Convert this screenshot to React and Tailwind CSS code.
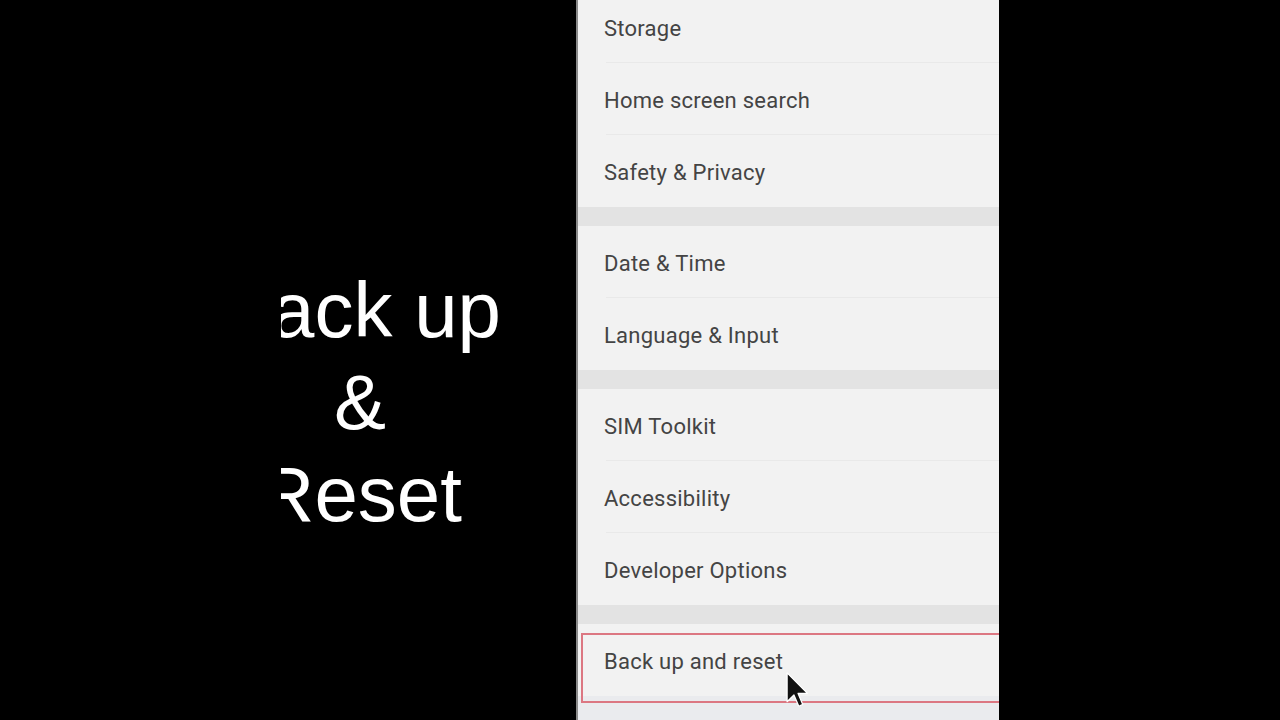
const groups = [
  ['Storage', 'Home screen search', 'Safety & Privacy'],
  ['Date & Time', 'Language & Input'],
  ['SIM Toolkit', 'Accessibility', 'Developer Options'],
  ['Back up and reset'],
]

function Row({ label, last }) {
  return (
    <div className="h-[72px] flex items-center pl-[26px] relative">
      <span className="text-[22px] tracking-[0.25px] text-[#444444] pt-[2px]">{label}</span>
      {!last && <div className="absolute left-[28px] right-0 bottom-0 h-px bg-[#e9e9e9]" />}
    </div>
  )
}

function Cursor() {
  return (
    <svg className="absolute left-[208px] top-[672px]" width="22" height="36" viewBox="0 0 12 20">
      <path d="M0.5 0.5 L0.5 16.5 L4.3 12.8 L7 19 L9.2 18 L6.6 11.9 L11.8 11.9 Z" fill="#111" stroke="#fff" strokeWidth="0.7" strokeLinejoin="round" />
    </svg>
  )
}

export default function App() {
  return (
    <div className="w-[1280px] h-[720px] bg-black flex overflow-hidden">
      <div className="w-[281px] shrink-0" />
      {/* title card, cut on its left edge as in the video frame */}
      <div className="w-[295px] shrink-0 overflow-hidden pt-[264px]">
        <div className="-ml-[137px] w-[432px] text-center text-white text-[78px] leading-[92px] font-['Liberation_Sans',Arial,sans-serif]">
          <div>Back up</div>
          <div>&amp;</div>
          <div>Reset</div>
        </div>
      </div>
      <div className="w-[423px] shrink-0 h-full bg-[#f2f2f2] border-l-2 border-[#8a8a8a] relative overflow-hidden font-['Roboto',sans-serif]">
        <div className="-mt-[9px]">
          {groups.map((g, gi) => (
            <div key={gi}>
              {g.map((label, i) => (
                <Row key={label} label={label} last={i === g.length - 1} />
              ))}
              {gi < groups.length - 1 && <div className="h-[19px] bg-[#e3e3e3]" />}
            </div>
          ))}
          <div className="h-[40px] bg-[#eaebee]" />
        </div>
        <div className="absolute left-[3px] -right-[4px] top-[633px] h-[70px] border-2 border-[#dc7782]" />
        <Cursor />
      </div>
    </div>
  )
}
